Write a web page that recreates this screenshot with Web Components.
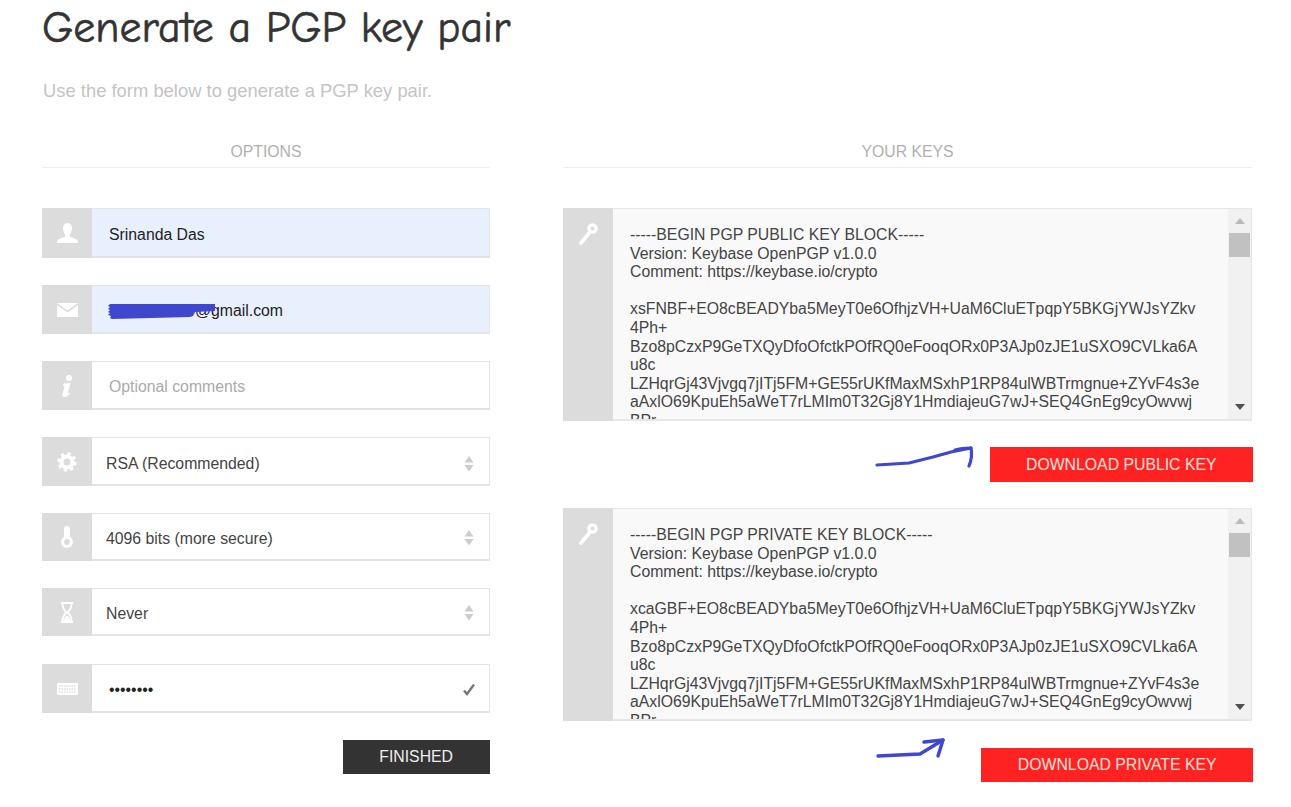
<!DOCTYPE html>
<html>
<head>
<meta charset="utf-8">
<title>Generate a PGP key pair</title>
<style>
  html, body { margin: 0; background: #fff; }
  body { font-family: "Liberation Sans", Arial, sans-serif; font-size: 15.8px; overflow: hidden; }
</style>
</head>
<body>
<pgp-page>
  <pgp-heading slot="head" sub="Use the form below to generate a PGP key pair.">Generate a PGP key pair</pgp-heading>

  <pgp-section slot="left" label="OPTIONS" gap="27">
    <pgp-field icon="user" h="50" fill="#e8f0fe" pad="17" color="#222">Srinanda Das</pgp-field>
    <pgp-field icon="mail" h="49" fill="#e8f0fe" pad="16" color="#222"><pgp-redact></pgp-redact>@gmail.com</pgp-field>
    <pgp-field icon="info" h="49" pad="17" color="#aaa">Optional comments</pgp-field>
    <pgp-field icon="cog" h="49" pad="14" top="6" color="#444" end="updown">RSA (Recommended)</pgp-field>
    <pgp-field icon="temp" h="48" pad="14" color="#444" end="updown">4096 bits (more secure)</pgp-field>
    <pgp-field icon="glass" h="48" pad="14" color="#444" end="updown">Never</pgp-field>
    <pgp-field icon="keyboard" h="49" pad="17" color="#222" end="check" style="margin-top:1px">••••••••</pgp-field>
    <pgp-action-row><pgp-button dark>FINISHED</pgp-button></pgp-action-row>
  </pgp-section>

  <pgp-section slot="right" label="YOUR KEYS" gap="26">
    <pgp-keybox>-----BEGIN PGP PUBLIC KEY BLOCK-----
Version: Keybase OpenPGP v1.0.0
Comment: https://keybase.io/crypto

xsFNBF+EO8cBEADYba5MeyT0e6OfhjzVH+UaM6CluETpqpY5BKGjYWJsYZkv
4Ph+
Bzo8pCzxP9GeTXQyDfoOfctkPOfRQ0eFooqORx0P3AJp0zJE1uSXO9CVLka6A
u8c
LZHqrGj43Vjvgq7jITj5FM+GE55rUKfMaxMSxhP1RP84ulWBTrmgnue+ZYvF4s3e
aAxlO69KpuEh5aWeT7rLMIm0T32Gj8Y1HmdiajeuG7wJ+SEQ4GnEg9cyOwvwj
BPr</pgp-keybox>
    <pgp-action-row gap="16" tall="35" style="margin-right:-1px">
      <pgp-scribble kind="long"></pgp-scribble>
      <pgp-button>DOWNLOAD PUBLIC KEY</pgp-button>
    </pgp-action-row>
    <pgp-keybox>-----BEGIN PGP PRIVATE KEY BLOCK-----
Version: Keybase OpenPGP v1.0.0
Comment: https://keybase.io/crypto

xcaGBF+EO8cBEADYba5MeyT0e6OfhjzVH+UaM6CluETpqpY5BKGjYWJsYZkv
4Ph+
Bzo8pCzxP9GeTXQyDfoOfctkPOfRQ0eFooqORx0P3AJp0zJE1uSXO9CVLka6A
u8c
LZHqrGj43Vjvgq7jITj5FM+GE55rUKfMaxMSxhP1RP84ulWBTrmgnue+ZYvF4s3e
aAxlO69KpuEh5aWeT7rLMIm0T32Gj8Y1HmdiajeuG7wJ+SEQ4GnEg9cyOwvwj
BPr</pgp-keybox>
    <pgp-action-row gap="36" tall="34" style="margin:1px -1px 0 0">
      <pgp-scribble kind="short"></pgp-scribble>
      <pgp-button>DOWNLOAD PRIVATE KEY</pgp-button>
    </pgp-action-row>
  </pgp-section>
</pgp-page>

<script>
// icons are drawn on the grey addon, white on #dcdcdc
const ICONS = {
  user: `<svg width="21" height="20" viewBox="0 0 21 20" fill="#fff"><path d="M10.500 0C7.500 0 6 2.200 6 5s1 5 2.200 6.500c.4.8.2 2-1 2.600C4 15.500 0 16.500 0 18.500V20h21v-1.500c0-2-4-3-7.200-4.400-1.200-.6-1.400-1.800-1-2.600C14 10 15 7.800 15 5s-1.500-5-4.500-5z"/></svg>`,
  mail: `<svg width="21" height="14" viewBox="0 0 21 14" fill="#fff"><path d="M0 0h21L10.500 7.500z"/><path d="M0 2l10.500 7.500L21 2v12H0z"/></svg>`,
  info: `<svg width="12" height="22" viewBox="0 0 12 22" fill="#fff"><circle cx="8" cy="3" r="3"/><path d="M2.500 8.500l7-.5-2.600 10c-.1.6.5.6 1.800-.4l.6.8C7.500 20.800 5.500 22 3.500 22c-1.800 0-2.500-1-2-2.700l1.900-7.600c.2-.8-.3-1-1.400-.9z"/></svg>`,
  cog: `<svg width="20" height="20" viewBox="0 0 20 20" fill="none" stroke="#fff"><circle cx="10" cy="10" r="5.500" stroke-width="4"/><circle cx="10" cy="10" r="8.200" stroke-width="3" stroke-dasharray="3.200 3.240"/></svg>`,
  temp: `<svg width="12" height="22" viewBox="0 0 12 22"><rect x="3" y="0" width="6" height="13" rx="3" fill="#fff"/><circle cx="6" cy="16" r="4.400" fill="#dcdcdc" stroke="#fff" stroke-width="3"/></svg>`,
  glass: `<svg width="14" height="21" viewBox="0 0 14 21"><path d="M2.500 1.500c0 3.500 1 6.500 4 9-3 2.500-4 5.500-4 9M11.500 1.500c0 3.500-1 6.500-4 9 3 2.500 4 5.500 4 9M1.500 1h11M1.500 20h11" fill="none" stroke="#fff" stroke-width="1.800" stroke-linecap="round"/><path d="M7 13.500c-2 1.500-3.500 3.500-3.500 6h7c0-2.500-1.500-4.500-3.500-6z" fill="#fff"/></svg>`,
  keyboard: `<svg width="21" height="12" viewBox="0 0 21 12"><rect width="21" height="12" rx="1" fill="#fff"/><path d="M2 3h17M2 6h17M2 9h17" stroke="#ccc" stroke-width="1" stroke-dasharray="1.500 1"/></svg>`,
  key: `<svg width="19" height="22" viewBox="0 0 19 22" fill="none" stroke="#fff" stroke-linecap="round"><circle cx="13.500" cy="5.500" r="3.600" stroke-width="3.400"/><path d="M11 9L2 20" stroke-width="3.600"/></svg>`
};

class PgpPage extends HTMLElement {
  constructor() {
    super();
    this.attachShadow({ mode: 'open' });
    this.shadowRoot.innerHTML = `
      <style>
        :host { display: block; width: 1291px; height: 807px; box-sizing: border-box; padding-left: 42px; overflow: hidden; }
        .cols { display: grid; grid-template-columns: 448px 689px; column-gap: 73px; }
      </style>
      <slot name="head"></slot>
      <div class="cols"><slot name="left"></slot><slot name="right"></slot></div>
    `;
  }
}

class PgpHeading extends HTMLElement {
  constructor() {
    super();
    this.attachShadow({ mode: 'open' });
  }
  connectedCallback() {
    this.shadowRoot.innerHTML = `
      <style>
        :host { display: block; height: 142px; }
        h1 { margin: 0; padding-top: 2px; height: 60px; font: 400 43.8px/52px "Comic Sans MS", "Comic Neue", "Chalkboard SE", cursive; -webkit-text-stroke: .6px #333; color: #333; white-space: nowrap; }
        p { margin: 0 0 0 1px; padding-top: 18px; font-size: 18.4px; line-height: 22px; color: #c4c4c4; }
      </style>
      <h1><slot></slot></h1>
      <p>${this.getAttribute('sub')}</p>
    `;
  }
}

class PgpSection extends HTMLElement {
  constructor() {
    super();
    this.attachShadow({ mode: 'open' });
  }
  connectedCallback() {
    this.shadowRoot.innerHTML = `
      <style>
        :host { display: flex; flex-direction: column; }
        h2 { margin: 0 0 40px; height: 24px; padding-top: 1px; border-bottom: 1px solid #eee; font: 400 15.8px/18px "Liberation Sans", Arial, sans-serif; color: #b0b0b0; text-align: center; }
        .rows { display: flex; flex-direction: column; gap: ${this.getAttribute('gap')}px; }
      </style>
      <h2>${this.getAttribute('label')}</h2>
      <div class="rows"><slot></slot></div>
    `;
  }
}

class PgpField extends HTMLElement {
  constructor() {
    super();
    this.attachShadow({ mode: 'open' });
  }
  connectedCallback() {
    const end = this.getAttribute('end');
    const tail = end === 'updown'
      ? `<svg width="10" height="16" viewBox="0 0 10 16" fill="#ccc" style="margin:-1px -1px 0 0"><path d="M5 0l4.500 6.500h-9z"/><path d="M.5 9h9L5 15.500z"/></svg>`
      : end === 'check'
        ? `<svg width="12" height="12" viewBox="0 0 12 12" fill="none" stroke="#777" stroke-width="2.400" style="margin-right:-2px"><path d="M1 6.500l3 3.500 7-9.500"/></svg>`
        : '';
    this.shadowRoot.innerHTML = `
      <style>
        :host { display: flex; height: ${this.getAttribute('h')}px; box-sizing: border-box; border: 1px solid #e4e4e4; border-bottom-width: 2px; }
        .addon { flex: 0 0 50px; margin: -1px 0 -2px -1px; background: #dcdcdc; display: flex; align-items: center; justify-content: center; }
        .addon svg { display: block; }
        .value { flex: 1; display: flex; align-items: center; justify-content: space-between; min-width: 0; padding: ${this.getAttribute('top') || 4}px 16px 0 ${this.getAttribute('pad')}px; background: ${this.getAttribute('fill') || '#fff'}; color: ${this.getAttribute('color')}; font-size: 15.8px; white-space: nowrap; }
        .value svg { flex: none; }
      </style>
      <div class="addon">${ICONS[this.getAttribute('icon')]}</div>
      <div class="value"><span><slot></slot></span>${tail}</div>
    `;
  }
}

// the blue paint scribble hiding the first part of the address
class PgpRedact extends HTMLElement {
  constructor() {
    super();
    this.attachShadow({ mode: 'open' });
    this.shadowRoot.innerHTML = `
      <style>
        :host { display: inline-block; width: 107px; height: 15px; margin-right: -20px; position: relative; vertical-align: -3px; }
        svg { display: block; }
      </style>
      <svg width="107" height="15" viewBox="0 0 107 15" fill="#3f48cc"><path d="M2 0h105v7l-20 1-2 4-3 1-78 2-2-1 1-2-3-1 2-2-2-1 2-2-2-1 2-2-2-1z"/></svg>
    `;
  }
}

class PgpKeybox extends HTMLElement {
  constructor() {
    super();
    this.attachShadow({ mode: 'open' });
    this.shadowRoot.innerHTML = `
      <style>
        :host { display: flex; height: 213px; box-sizing: border-box; border: 1px solid #e6e6e6; border-bottom-width: 2px; background: #f9f9f9; }
        .addon { flex: 0 0 50px; margin: -1px 0 -2px -1px; background: #dcdcdc; display: flex; justify-content: center; padding-top: 15px; box-sizing: border-box; }
        .addon svg { display: block; margin-left: 1px; }
        .text { flex: 1; overflow: hidden; padding: 17px 0 0 17px; white-space: pre; font-size: 15.8px; line-height: 18.6px; color: #444; }
        .bar { flex: 0 0 23px; display: flex; flex-direction: column; align-items: center; background: #f1f1f1; padding-top: 9px; position: relative; }
        .thumb { width: 21px; height: 24px; margin-top: 9px; background: #c1c1c1; }
        .up, .down { width: 0; height: 0; border-left: 5px solid transparent; border-right: 5px solid transparent; }
        .up { border-bottom: 6px solid #bbb; }
        .down { position: absolute; bottom: 9px; border-top: 6px solid #505050; }
      </style>
      <div class="addon">${ICONS.key}</div>
      <div class="text"><slot></slot></div>
      <div class="bar"><div class="up"></div><div class="thumb"></div><div class="down"></div></div>
    `;
  }
}

class PgpActionRow extends HTMLElement {
  constructor() {
    super();
    this.attachShadow({ mode: 'open' });
  }
  connectedCallback() {
    const gap = this.getAttribute('gap') || 0;
    const tall = this.getAttribute('tall') || 34;
    this.shadowRoot.innerHTML = `
      <style>
        :host { display: flex; justify-content: flex-end; align-items: stretch; gap: ${gap}px; height: ${tall}px; }
      </style>
      <slot></slot>
    `;
  }
}

class PgpButton extends HTMLElement {
  constructor() {
    super();
    this.attachShadow({ mode: 'open' });
    this.shadowRoot.innerHTML = `
      <style>
        :host { display: flex; align-items: center; padding: 0 36.5px; background: #ff2222; color: #fbe3dc; font-size: 15.8px; white-space: nowrap; }
        :host([dark]) { background: #333; color: #eee; padding: 0 37px 0 36px; }
      </style>
      <slot></slot>
    `;
  }
}

// hand drawn arrows pointing at the download buttons
class PgpScribble extends HTMLElement {
  constructor() {
    super();
    this.attachShadow({ mode: 'open' });
  }
  connectedCallback() {
    const long = this.getAttribute('kind') === 'long';
    const svg = long
      ? `<svg width="98" height="24" viewBox="0 0 98 24" fill="none" stroke="#3f48cc" stroke-width="3.200" stroke-linecap="round" stroke-linejoin="round"><path d="M1 19l32-2 24-6 18-5 20-4"/><path d="M79 4c6-2 13-2 16-2 1 5 .5 12-2 18"/></svg>`
      : `<svg width="68" height="20" viewBox="0 0 68 20" fill="none" stroke="#3f48cc" stroke-width="3.400" stroke-linecap="round" stroke-linejoin="round"><path d="M1 19l42-2 23-14"/><path d="M47 5l19-2-5 16"/></svg>`;
    this.shadowRoot.innerHTML = `
      <style>
        :host { display: block; margin-top: ${long ? -1 : -11}px; }
        svg { display: block; overflow: visible; }
      </style>
      ${svg}
    `;
  }
}

customElements.define('pgp-page', PgpPage);
customElements.define('pgp-heading', PgpHeading);
customElements.define('pgp-section', PgpSection);
customElements.define('pgp-field', PgpField);
customElements.define('pgp-redact', PgpRedact);
customElements.define('pgp-keybox', PgpKeybox);
customElements.define('pgp-action-row', PgpActionRow);
customElements.define('pgp-button', PgpButton);
customElements.define('pgp-scribble', PgpScribble);
</script>
</body>
</html>
